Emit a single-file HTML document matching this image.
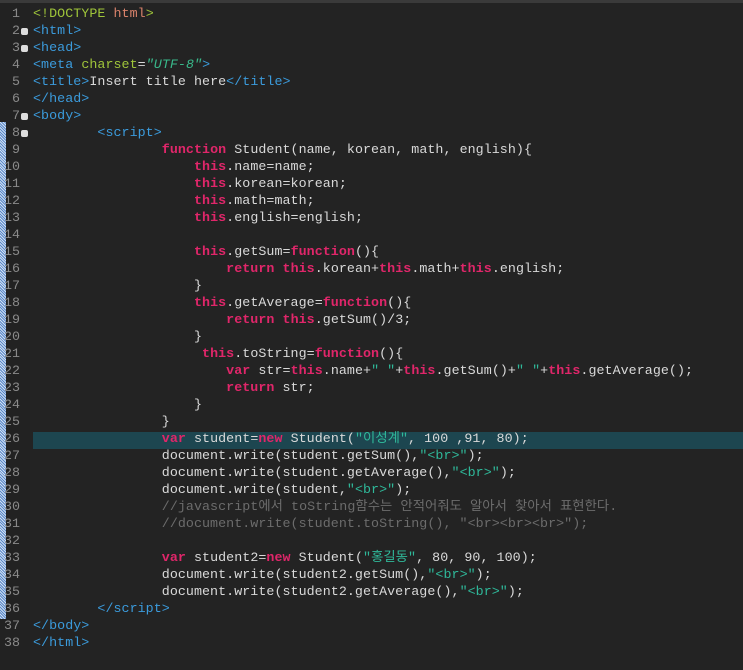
<!DOCTYPE html>
<html><head><meta charset="UTF-8"><style>
body{margin:0;width:743px;height:670px;background:#232323;overflow:hidden;position:relative;font-family:"Liberation Mono","Noto Sans CJK KR",monospace;font-size:13.33px;color:#d9d9d9}
.top{position:absolute;left:0;top:0;width:743px;height:3px;background:#3a3a3a}
.gut{position:absolute;left:0;top:3px;width:30px;height:667px;background:#222}
.stripe{position:absolute;left:0;top:122px;width:6px;height:497px;background:repeating-linear-gradient(45deg,#5a88c8 0 1px,#d0e0f4 1px 2px)}
.hl{position:absolute;left:33px;top:432px;width:710px;height:17px;background:#1d4650}
.l{position:absolute;left:33px;height:17px;line-height:17px;white-space:pre;letter-spacing:0.05px}
.n{position:absolute;left:0;width:20px;height:17px;line-height:17px;color:#8a8a8a;text-align:right;z-index:2}
.f{position:absolute;left:21px;width:7px;height:7px;border-radius:2px;background:#ddd;z-index:2}
.t{color:#3b9bdc}.k{color:#e0266a;font-weight:bold}.s{color:#2fb99a}.c{color:#6c6c6c}.a{color:#9fc53a}.d{color:#9fc53a}.o{color:#d9826b}.i{color:#39b98b;font-style:italic}
</style></head><body>
<div class="top"></div><div class="gut"></div><div class="stripe"></div><div class="hl"></div>
<div class="n" style="top:6px">1</div><div class="l" style="top:6px"><span class="d">&lt;!DOCTYPE</span> <span class="o">html</span><span class="d">&gt;</span></div>
<div class="n" style="top:23px">2</div><div class="f" style="top:28px"></div><div class="l" style="top:23px"><span class="t">&lt;html&gt;</span></div>
<div class="n" style="top:40px">3</div><div class="f" style="top:45px"></div><div class="l" style="top:40px"><span class="t">&lt;head&gt;</span></div>
<div class="n" style="top:57px">4</div><div class="l" style="top:57px"><span class="t">&lt;meta</span> <span class="a">charset</span>=<span class="i">"UTF-8"</span><span class="t">&gt;</span></div>
<div class="n" style="top:74px">5</div><div class="l" style="top:74px"><span class="t">&lt;title&gt;</span>Insert title here<span class="t">&lt;/title&gt;</span></div>
<div class="n" style="top:91px">6</div><div class="l" style="top:91px"><span class="t">&lt;/head&gt;</span></div>
<div class="n" style="top:108px">7</div><div class="f" style="top:113px"></div><div class="l" style="top:108px"><span class="t">&lt;body&gt;</span></div>
<div class="n" style="top:125px">8</div><div class="f" style="top:130px"></div><div class="l" style="top:125px">        <span class="t">&lt;script&gt;</span></div>
<div class="n" style="top:142px">9</div><div class="l" style="top:142px">                <span class="k">function</span> Student(name, korean, math, english){</div>
<div class="n" style="top:159px">10</div><div class="l" style="top:159px">                    <span class="k">this</span>.name=name;</div>
<div class="n" style="top:176px">11</div><div class="l" style="top:176px">                    <span class="k">this</span>.korean=korean;</div>
<div class="n" style="top:193px">12</div><div class="l" style="top:193px">                    <span class="k">this</span>.math=math;</div>
<div class="n" style="top:210px">13</div><div class="l" style="top:210px">                    <span class="k">this</span>.english=english;</div>
<div class="n" style="top:227px">14</div>
<div class="n" style="top:244px">15</div><div class="l" style="top:244px">                    <span class="k">this</span>.getSum=<span class="k">function</span>(){</div>
<div class="n" style="top:261px">16</div><div class="l" style="top:261px">                        <span class="k">return</span> <span class="k">this</span>.korean+<span class="k">this</span>.math+<span class="k">this</span>.english;</div>
<div class="n" style="top:278px">17</div><div class="l" style="top:278px">                    }</div>
<div class="n" style="top:295px">18</div><div class="l" style="top:295px">                    <span class="k">this</span>.getAverage=<span class="k">function</span>(){</div>
<div class="n" style="top:312px">19</div><div class="l" style="top:312px">                        <span class="k">return</span> <span class="k">this</span>.getSum()/3;</div>
<div class="n" style="top:329px">20</div><div class="l" style="top:329px">                    }</div>
<div class="n" style="top:346px">21</div><div class="l" style="top:346px">                     <span class="k">this</span>.toString=<span class="k">function</span>(){</div>
<div class="n" style="top:363px">22</div><div class="l" style="top:363px">                        <span class="k">var</span> str=<span class="k">this</span>.name+<span class="s">" "</span>+<span class="k">this</span>.getSum()+<span class="s">" "</span>+<span class="k">this</span>.getAverage();</div>
<div class="n" style="top:380px">23</div><div class="l" style="top:380px">                        <span class="k">return</span> str;</div>
<div class="n" style="top:397px">24</div><div class="l" style="top:397px">                    }</div>
<div class="n" style="top:414px">25</div><div class="l" style="top:414px">                }</div>
<div class="n" style="top:431px">26</div><div class="l" style="top:431px">                <span class="k">var</span> student=<span class="k">new</span> Student(<span class="s">"이성계"</span>, 100 ,91, 80);</div>
<div class="n" style="top:448px">27</div><div class="l" style="top:448px">                document.write(student.getSum(),<span class="s">"&lt;br&gt;"</span>);</div>
<div class="n" style="top:465px">28</div><div class="l" style="top:465px">                document.write(student.getAverage(),<span class="s">"&lt;br&gt;"</span>);</div>
<div class="n" style="top:482px">29</div><div class="l" style="top:482px">                document.write(student,<span class="s">"&lt;br&gt;"</span>);</div>
<div class="n" style="top:499px">30</div><div class="l c" style="top:499px">                //javascript에서 toString함수는 안적어줘도 알아서 찾아서 표현한다.</div>
<div class="n" style="top:516px">31</div><div class="l c" style="top:516px">                //document.write(student.toString(), "&lt;br&gt;&lt;br&gt;&lt;br&gt;");</div>
<div class="n" style="top:533px">32</div>
<div class="n" style="top:550px">33</div><div class="l" style="top:550px">                <span class="k">var</span> student2=<span class="k">new</span> Student(<span class="s">"홍길동"</span>, 80, 90, 100);</div>
<div class="n" style="top:567px">34</div><div class="l" style="top:567px">                document.write(student2.getSum(),<span class="s">"&lt;br&gt;"</span>);</div>
<div class="n" style="top:584px">35</div><div class="l" style="top:584px">                document.write(student2.getAverage(),<span class="s">"&lt;br&gt;"</span>);</div>
<div class="n" style="top:601px">36</div><div class="l" style="top:601px">        <span class="t">&lt;/script&gt;</span></div>
<div class="n" style="top:618px">37</div><div class="l" style="top:618px"><span class="t">&lt;/body&gt;</span></div>
<div class="n" style="top:635px">38</div><div class="l" style="top:635px"><span class="t">&lt;/html&gt;</span></div>
</body></html>
